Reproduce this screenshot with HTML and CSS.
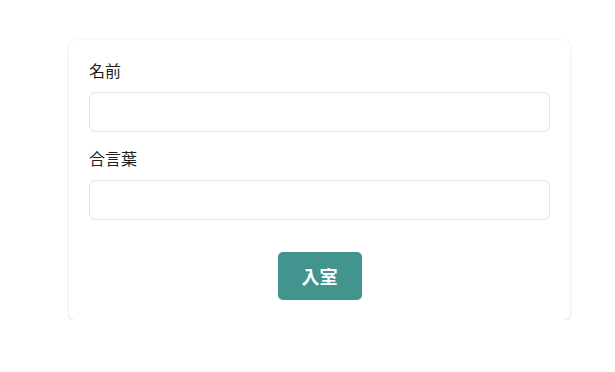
FILE: index.html
```html
<!DOCTYPE html>
<html lang="ja">
<head>
<meta charset="utf-8">
<title>入室</title>
<link rel="stylesheet" href="styles.css">
</head>
<body>
<main class="page">
  <form class="card">
    <label class="field">
      <span class="label">名前</span>
      <input class="input" type="text">
    </label>
    <label class="field">
      <span class="label">合言葉</span>
      <input class="input" type="password">
    </label>
    <div class="actions">
      <button class="btn" type="button">入室</button>
    </div>
  </form>
</main>
</body>
</html>
```

FILE: styles.css
```css
html, body {
  margin: 0;
  padding: 0;
  background: #ffffff;
}
body {
  font-family: "Noto Sans CJK JP", "Noto Sans", sans-serif;
  color: #1f1f1f;
}
.page {
  padding: 40px 45px 0 69px;
}
.card {
  box-sizing: border-box;
  width: 501px;
  padding: 20px;
  background: #ffffff;
  border-radius: 6px;
  box-shadow: 0 1px 3px rgba(0, 0, 0, 0.14), 0 0 1px rgba(0, 0, 0, 0.06);
  display: flex;
  flex-direction: column;
  gap: 16px;
}
.field {
  display: flex;
  flex-direction: column;
  gap: 12px;
}
.label {
  font-size: 16px;
  line-height: 20px;
  color: #1f1f1f;
}
.input {
  box-sizing: border-box;
  height: 40px;
  width: 100%;
  border: 1px solid #e2e4e8;
  border-radius: 6px;
  background: #ffffff;
  padding: 0 12px;
  font-size: 16px;
  outline: none;
}
.actions {
  display: flex;
  justify-content: center;
  padding-top: 16px;
}
.btn {
  height: 48px;
  width: 84px;
  border: none;
  border-radius: 5px;
  background: #43938f;
  color: #ffffff;
  font-family: "Noto Sans CJK JP", "Noto Sans", sans-serif;
  font-weight: 700;
  font-size: 18px;
  padding: 0;
}
```
